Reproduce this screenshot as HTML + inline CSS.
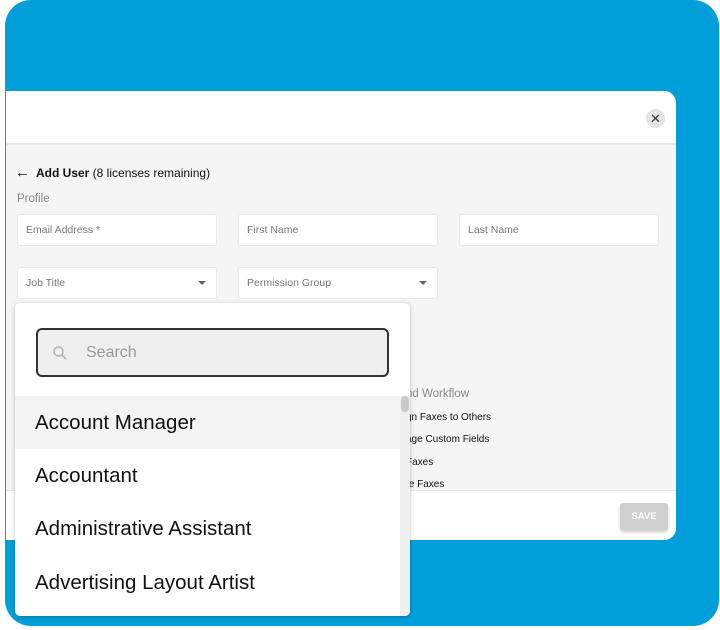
<!DOCTYPE html>
<html><head><style>
*{box-sizing:border-box;margin:0;padding:0}
body{width:720px;height:630px;background:#fff;position:relative;overflow:hidden;font-family:"Liberation Sans",sans-serif}
.bg{position:absolute;left:5px;top:0;width:714px;height:626px;background:#009fd9;border-radius:26px}
.modal{position:absolute;left:6px;top:91px;width:670px;height:449px;background:#f5f5f5;border-radius:0 12px 12px 0;overflow:hidden}
.hdr{position:absolute;left:0;top:0;width:670px;height:54px;background:#fff;border-bottom:2px solid #e6e6e6}
.close{position:absolute;left:640px;top:18px;width:19px;height:19px;border-radius:50%;background:#e4e4e4;font-size:13px;line-height:19px;text-align:center;color:#333}
.t{position:absolute;font-size:11.5px;color:#111}
.f{position:absolute;background:#fff;border:1px solid #e8e8e8;border-radius:3px;font-size:10.5px;color:#777;padding-left:8px;line-height:31px;height:32px;width:200px}
.arr{position:absolute;right:10px;top:13px;border:4px solid transparent;border-top:4px solid #666}
.ftr{position:absolute;left:0;top:399px;width:670px;height:50px;background:#fff;border-top:1px solid #e6e6e6}
.save{position:absolute;left:614px;top:12px;width:48px;height:27px;background:#d0d0d0;border-radius:3px;color:#fff;font-size:9.5px;font-weight:bold;text-align:center;line-height:27px;box-shadow:0 2px 3px rgba(0,0,0,.2)}
.dd{position:absolute;left:15px;top:303px;width:395px;height:313px;background:#fff;border-radius:5px;box-shadow:0 1px 4px rgba(0,0,0,.25);overflow:hidden}
.srch{position:absolute;left:21px;top:25px;width:353px;height:49px;background:#efeff0;border:2px solid #333;border-radius:6px}
.it{position:absolute;left:0;width:385px;height:53px;font-size:20.5px;color:#111;padding-left:20px;line-height:53px}
.sb{position:absolute;left:385px;top:93px;width:10px;height:220px;background:#f0f0f0}
.th{position:absolute;left:1px;top:0;width:8px;height:16px;background:#c8c8c8;border-radius:4px}
.p{position:absolute;font-size:10px;color:#111}
</style></head><body>
<div class="bg"></div>
<div class="modal">
 <div class="hdr"><div class="close">✕</div></div>
 <div class="t" style="left:9px;top:73px;font-size:15px">←</div>
 <div class="t" style="left:30px;top:75px;font-size:12px"><b>Add User</b> (8 licenses remaining)</div>
 <div class="t" style="left:11px;top:102px;color:#888">Profile</div>
 <div class="f" style="left:11px;top:123px">Email Address *</div>
 <div class="f" style="left:232px;top:123px">First Name</div>
 <div class="f" style="left:453px;top:123px">Last Name</div>
 <div class="f" style="left:11px;top:176px">Job Title<span class="arr"></span></div>
 <div class="f" style="left:232px;top:176px">Permission Group<span class="arr"></span></div>
 <div class="t" style="left:400px;top:297px;color:#888;font-size:11.5px">nd Workflow</div>
 <div class="p" style="left:400px;top:321px">gn Faxes to Others</div>
 <div class="p" style="left:400px;top:343px">age Custom Fields</div>
 <div class="p" style="left:400px;top:366px">Faxes</div>
 <div class="p" style="left:400px;top:388px">te Faxes</div>
 <div class="ftr"><div class="save">SAVE</div></div>
</div>
<div class="dd">
 <div class="srch">
  <svg style="position:absolute;left:14px;top:15px" width="16" height="16" viewBox="0 0 16 16"><circle cx="6.5" cy="6.5" r="4.5" fill="none" stroke="#b5b5b5" stroke-width="1.6"/><path d="M10 10l4 4" stroke="#b5b5b5" stroke-width="1.8"/></svg>
  <div style="position:absolute;left:48px;top:14px;font-size:16px;color:#999">Search</div>
 </div>
 <div class="it" style="top:93px;background:#f4f4f4">Account Manager</div>
 <div class="it" style="top:146px">Accountant</div>
 <div class="it" style="top:199px">Administrative Assistant</div>
 <div class="it" style="top:253px">Advertising Layout Artist</div>
 <div class="sb"><div class="th"></div></div>
</div>
</body></html>
